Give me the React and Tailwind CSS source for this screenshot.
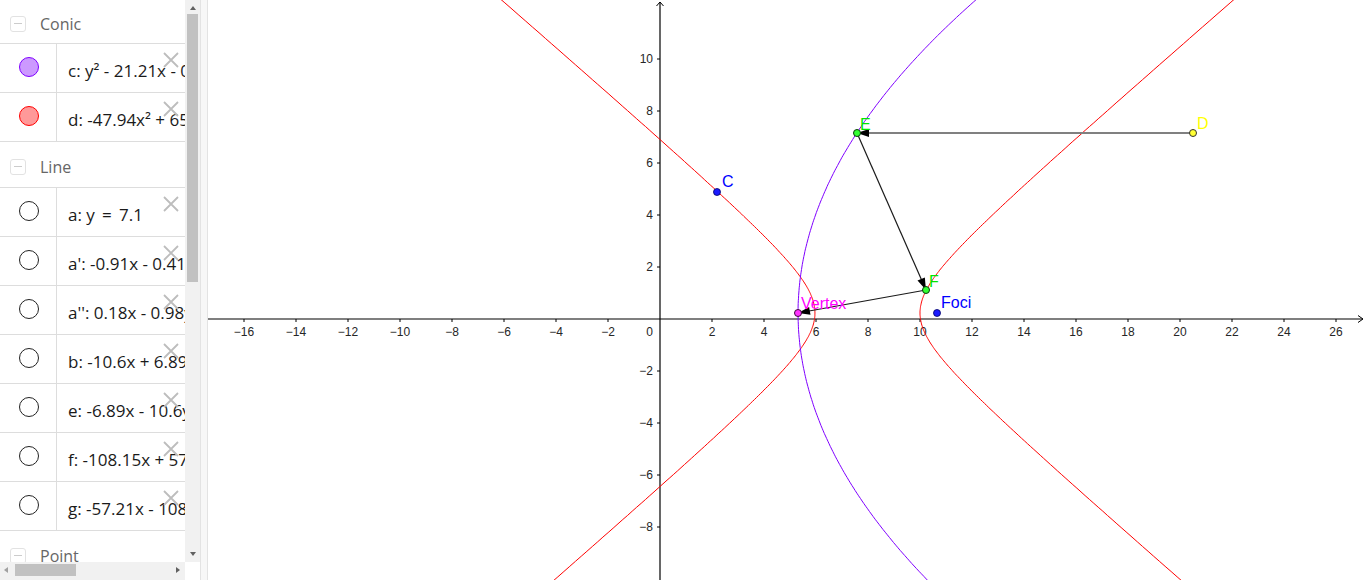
import React from "react";

// graphics view: origin at page (660,319), 26px per unit, view starts at page x=208
const OX = 452;
const OY = 319;
const U = 26;
const sx = (x) => OX + U * x;
const sy = (y) => OY - U * y;

function parabolaPath() {
  const pts = [];
  for (let y = -11; y <= 13; y += 0.1) {
    const x = 5.31 + ((y - 0.23) * (y - 0.23)) / 21.21;
    pts.push(`${sx(x).toFixed(1)},${sy(y).toFixed(1)}`);
  }
  return "M" + pts.join(" L");
}

function hyperbolaPath(side) {
  const a = 2.02;
  const b = 1.746;
  const pts = [];
  for (let t = -3.3; t <= 3.3; t += 0.02) {
    const x = 7.98 + side * a * Math.cosh(t);
    const y = 0.23 + b * Math.sinh(t);
    pts.push(`${sx(x).toFixed(1)},${sy(y).toFixed(1)}`);
  }
  return "M" + pts.join(" L");
}

function arrowHead(x1, y1, x2, y2, len = 11, half = 3.5) {
  const dx = x2 - x1;
  const dy = y2 - y1;
  const d = Math.hypot(dx, dy);
  const ux = dx / d;
  const uy = dy / d;
  const bx = x2 - ux * len;
  const by = y2 - uy * len;
  return `${x2},${y2} ${bx - uy * half},${by + ux * half} ${bx + uy * half},${by - ux * half}`;
}

function Graphics() {
  const xs = [];
  for (let i = -16; i <= 26; i += 2) if (i !== 0) xs.push(i);
  const ys = [-8, -6, -4, -2, 2, 4, 6, 8, 10];
  const fmt = (n) => (n < 0 ? "\u2212" + Math.abs(n) : String(n));

  const E = [649, 133];
  const D = [985, 133];
  const F = [718, 290];
  const V = [590, 313];
  const Fo = [729, 313];
  const C = [509, 192];

  return (
    <svg className="absolute inset-0 h-full w-full" viewBox="0 0 1158 580">
      {/* axes */}
      <line x1="0" y1={OY} x2="1155" y2={OY} stroke="#000" strokeWidth="1.2" />
      <polyline points="1150,315.5 1155,319 1150,322.5" fill="none" stroke="#000" strokeWidth="1" />
      <line x1={OX} y1="2" x2={OX} y2="580" stroke="#000" strokeWidth="1.2" />
      <polyline points="448.5,6 452,2 455.5,6" fill="none" stroke="#000" strokeWidth="1" />
      {xs.map((i) => (
        <g key={"x" + i}>
          <line x1={sx(i)} y1={OY} x2={sx(i)} y2={OY + 3} stroke="#000" />
          <text
            x={sx(i)}
            y={OY + 17}
            textAnchor="middle"
            fontSize="12"
            fill="#262626"
            fontFamily="'Liberation Sans', Arial, sans-serif"
          >
            {fmt(i)}
          </text>
        </g>
      ))}
      <text x={OX - 7} y={OY + 17} textAnchor="end" fontSize="12" fill="#262626" fontFamily="'Liberation Sans', Arial, sans-serif">
        0
      </text>
      {ys.map((i) => (
        <g key={"y" + i}>
          <line x1={OX - 3} y1={sy(i)} x2={OX} y2={sy(i)} stroke="#000" />
          <text
            x={OX - 7}
            y={sy(i) + 4}
            textAnchor="end"
            fontSize="12"
            fill="#262626"
            fontFamily="'Liberation Sans', Arial, sans-serif"
          >
            {fmt(i)}
          </text>
        </g>
      ))}

      {/* curves */}
      <path d={hyperbolaPath(-1)} fill="none" stroke="#ff0000" strokeWidth="1" />
      <path d={hyperbolaPath(1)} fill="none" stroke="#ff0000" strokeWidth="1" />
      <path d={parabolaPath()} fill="none" stroke="#7f00ff" strokeWidth="1" />

      {/* segment D -> E and vectors */}
      <line x1={D[0]} y1={D[1]} x2={E[0] + 10} y2={E[1]} stroke="#808080" strokeWidth="2" />
      <polygon points={arrowHead(D[0], D[1], E[0], E[1], 12, 4)} fill="#000" />
      <line x1={E[0]} y1={E[1]} x2={F[0]} y2={F[1]} stroke="#1a1a1a" strokeWidth="1.2" />
      <polygon points={arrowHead(E[0], E[1], F[0], F[1], 12, 4)} fill="#000" />
      <line x1={F[0]} y1={F[1]} x2={V[0]} y2={V[1]} stroke="#1a1a1a" strokeWidth="1.2" />
      <polygon points={arrowHead(F[0], F[1], V[0], V[1], 12, 4)} fill="#000" />

      {/* points */}
      <circle cx={E[0]} cy={E[1]} r="3.5" fill="#33ff33" stroke="#0a3d0a" strokeWidth="1" />
      <circle cx={F[0]} cy={F[1]} r="3.5" fill="#33ff33" stroke="#0a3d0a" strokeWidth="1" />
      <circle cx={D[0]} cy={D[1]} r="3.5" fill="#ffff33" stroke="#333" strokeWidth="1" />
      <circle cx={V[0]} cy={V[1]} r="3.5" fill="#ff33ff" stroke="#3d0a3d" strokeWidth="1" />
      <circle cx={Fo[0]} cy={Fo[1]} r="3.5" fill="#1a1aff" stroke="#000066" strokeWidth="0.8" />
      <circle cx={C[0]} cy={C[1]} r="3.5" fill="#1a1aff" stroke="#000066" strokeWidth="0.8" />

      {/* labels */}
      <g fontSize="16" fontFamily="'Liberation Sans', Arial, sans-serif">
        <text x={E[0] + 3} y={E[1] - 3} fill="#00e600">E</text>
        <text x={F[0] + 3} y={F[1] - 3} fill="#00e600">F</text>
        <text x={D[0] + 4} y={D[1] - 4} fill="#ffff00">D</text>
        <text x={V[0] + 3} y={V[1] - 4} fill="#ff00ff">Vertex</text>
        <text x={Fo[0] + 4} y={Fo[1] - 5} fill="#0000ff">Foci</text>
        <text x={C[0] + 5} y={C[1] - 5} fill="#0000ff">C</text>
      </g>
    </svg>
  );
}

function GroupHeader({ label, first }) {
  return (
    <div
      className={`flex items-center border-b border-[#dddddd] pt-[4px] ${first ? "h-[44px]" : "h-[46px]"}`}
    >
      <div className="ml-[10px] flex h-[16px] w-[16px] items-center justify-center rounded-[3px] border border-[#e2e2e2]">
        <div className="h-[1.5px] w-[8px] bg-[#cccccc]" />
      </div>
      <span className="ml-[14px] text-[16px] text-[#666666]">{label}</span>
    </div>
  );
}

function ItemRow({ text, marker }) {
  let circle = "border-[1.5px] border-[#222222] bg-white";
  if (marker === "purple") circle = "border border-[#7f00ff] bg-[#cc99ff]";
  if (marker === "red") circle = "border border-[#ff0000] bg-[#ff9999]";
  return (
    <div className="flex h-[49px] border-b border-[#dddddd]">
      <div className="flex w-[57px] shrink-0 items-center justify-center border-r border-[#dddddd] pb-[2px] pl-[1px]">
        <div className={`h-[20px] w-[20px] rounded-full ${circle}`} />
      </div>
      <div className="relative flex flex-1 items-center overflow-hidden whitespace-pre pl-[11px] pt-[6px] text-[17px] text-[#1a1a1a]">
        {text}
        <svg className="absolute left-[106px] top-[8px] h-[16px] w-[16px]" viewBox="0 0 16 16">
          <path d="M1 1 L15 15 M15 1 L1 15" stroke="#bdbdbd" strokeWidth="1.8" />
        </svg>
      </div>
    </div>
  );
}

export default function App() {
  return (
    <div
      className="flex h-[580px] w-[1366px] overflow-hidden bg-white"
      style={{ fontFamily: "'Open Sans', 'Noto Sans', sans-serif" }}
    >
      {/* algebra view */}
      <div className="flex w-[200px] shrink-0 flex-col">
        <div className="flex h-[562px]">
          <div className="w-[185px] overflow-hidden">
            <GroupHeader label="Conic" first />
            <ItemRow marker="purple" text="c: y² - 21.21x - 0.46y = -112.57" />
            <ItemRow marker="red" text="d: -47.94x² + 65.63y² + 765.09x" />
            <GroupHeader label="Line" />
            <ItemRow text={"a: y \u2009=\u2009 7.1"} />
            <ItemRow text="a': -0.91x - 0.41y = -9.85" />
            <ItemRow text="a'': 0.18x - 0.98y = 1.58" />
            <ItemRow text="b: -10.6x + 6.89y = -99.7" />
            <ItemRow text="e: -6.89x - 10.6y = -83.8" />
            <ItemRow text="f: -108.15x + 57.21y = -1043" />
            <ItemRow text="g: -57.21x - 108.15y = -667" />
            <GroupHeader label="Point" />
          </div>
          {/* vertical scrollbar */}
          <div className="flex w-[15px] flex-col items-center bg-[#f1f1f1]">
            <div className="mt-[6px] h-0 w-0 border-x-[3.5px] border-b-[4px] border-x-transparent border-b-[#606060]" />
            <div className="mt-[4px] h-[268px] w-[11px] bg-[#c1c1c1]" />
            <div className="flex-1" />
            <div className="mb-[6px] h-0 w-0 border-x-[3.5px] border-t-[4px] border-x-transparent border-t-[#606060]" />
          </div>
        </div>
        <div className="flex h-[18px]">
          {/* horizontal scrollbar */}
          <div className="flex w-[185px] items-center bg-[#f1f1f1] pb-[2px]">
            <div className="ml-[4px] h-0 w-0 border-y-[3px] border-r-[4px] border-y-transparent border-r-[#a0a0a0]" />
            <div className="ml-[7px] h-[12px] w-[61px] bg-[#c1c1c1]" />
            <div className="flex-1" />
            <div className="mr-[5px] h-0 w-0 border-y-[3px] border-l-[4px] border-y-transparent border-l-[#606060]" />
          </div>
          <div className="flex-1 bg-white" />
        </div>
      </div>

      {/* splitter */}
      <div className="w-[8px] shrink-0 border-x border-[#e3e3e3] bg-[#f7f7f7]" />

      {/* graphics view */}
      <div className="relative flex-1">
        <Graphics />
      </div>
    </div>
  );
}
